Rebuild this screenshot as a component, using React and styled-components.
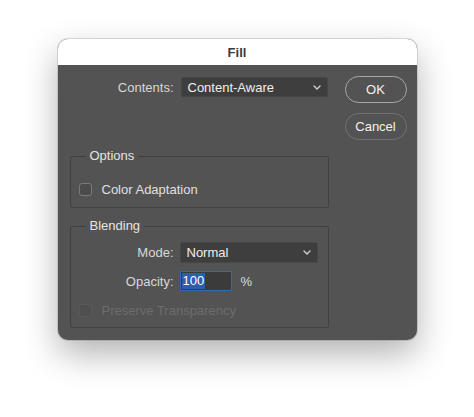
import React from "react";
import styled, { createGlobalStyle } from "styled-components";

const Global = createGlobalStyle`
  html, body {
    margin: 0;
    background: #ffffff;
  }
  body {
    font-family: "Liberation Sans", Arial, sans-serif;
    font-size: 13px;
  }
`;

const Page = styled.div`
  display: flex;
  justify-content: center;
  padding-top: 39px;
  width: 474px;
  height: 417px;
  box-sizing: border-box;
`;

const Dialog = styled.div`
  width: 359px;
  height: 301px;
  border-radius: 10px;
  overflow: hidden;
  background: #535353;
  box-shadow: 0 14px 34px rgba(0, 0, 0, 0.3), 0 0 0 1px rgba(0, 0, 0, 0.12);
  display: flex;
  flex-direction: column;
`;

const TitleBar = styled.div`
  height: 28px;
  background: #ffffff;
  display: flex;
  align-items: center;
  justify-content: center;
  font-weight: bold;
  font-size: 13px;
  color: #3b3b3b;
`;

const Body = styled.div`
  display: flex;
  padding: 12px 10px 12px 12px;
  color: #dedede;
`;

const Main = styled.div`
  width: 259px;
  display: flex;
  flex-direction: column;
`;

const ContentsRow = styled.div`
  display: flex;
  align-items: center;
  justify-content: flex-end;
  gap: 7px;
  padding-right: 1px;
  height: 20px;
`;

const Label = styled.span`
  color: #d8d8d8;
  white-space: nowrap;
`;

const Select = styled.div`
  width: ${(p) => p.width}px;
  height: ${(p) => p.height}px;
  box-sizing: border-box;
  background: #3e3e3e;
  border: 1px solid #474747;
  border-radius: 2px;
  display: flex;
  align-items: center;
  justify-content: space-between;
  padding: 0 6px 0 6px;
  color: #f0f0f0;
`;

const Chevron = () => (
  <svg width="8" height="5" viewBox="0 0 8 5">
    <path d="M1 1 L4 4 L7 1" fill="none" stroke="#d0d0d0" strokeWidth="1.4" strokeLinecap="round" strokeLinejoin="round" />
  </svg>
);

const Group = styled.fieldset`
  margin: ${(p) => p.top}px 0 0 0;
  padding: ${(p) => p.pad};
  border: 1px solid #414141;
  border-radius: 2px;
  min-width: 0;
`;

const Legend = styled.legend`
  margin-left: 15px;
  padding: 0 4px;
  line-height: 16px;
  color: #e4e4e4;
`;

const CheckRow = styled.label`
  display: flex;
  align-items: center;
  gap: 10px;
  height: 16px;
  padding-left: 8px;
  margin-top: ${(p) => p.top || 0}px;
  color: ${(p) => (p.disabled ? "#6c6c6c" : "#e0e0e0")};
`;

const Box = styled.span`
  width: 13px;
  height: 13px;
  box-sizing: border-box;
  border-radius: 3px;
  background: ${(p) => (p.disabled ? "#4f4f4f" : "#4b4b4b")};
  border: 1px solid ${(p) => (p.disabled ? "#595959" : "#7b7b7b")};
`;

const FormGrid = styled.div`
  display: grid;
  grid-template-columns: 103px auto;
  column-gap: 6px;
  row-gap: 8px;
  align-items: center;
`;

const RightLabel = styled(Label)`
  justify-self: end;
`;

const OpacityCell = styled.div`
  display: flex;
  align-items: center;
  gap: 9px;
`;

const NumberField = styled.div`
  width: 52px;
  height: 20px;
  box-sizing: border-box;
  background: #3b3b3b;
  border: 1px solid #3668ad;
  display: flex;
  align-items: center;
  padding-left: 1px;
`;

const Selected = styled.span`
  background: #2f5ea6;
  color: #ffffff;
  line-height: 16px;
  padding: 0 1px;
`;

const Buttons = styled.div`
  margin-left: 16px;
  margin-top: -1px;
  display: flex;
  flex-direction: column;
  gap: 10px;
`;

const Button = styled.button`
  width: 62px;
  height: 27px;
  border-radius: 14px;
  background: transparent;
  border: 1.5px solid ${(p) => (p.primary ? "#a8a8a8" : "#727272")};
  color: #f2f2f2;
  font-family: "Liberation Sans", Arial, sans-serif;
  font-size: 13px;
  padding: 0;
`;

export default function App() {
  return (
    <>
      <Global />
      <Page>
        <Dialog>
          <TitleBar>Fill</TitleBar>
          <Body>
            <Main>
              <ContentsRow>
                <Label>Contents:</Label>
                <Select width={147} height={20}>
                  Content-Aware
                  <Chevron />
                </Select>
              </ContentsRow>

              <Group top={51} pad="17px 0 10px 0">
                <Legend>Options</Legend>
                <CheckRow>
                  <Box />
                  Color Adaptation
                </CheckRow>
              </Group>

              <Group top={10} pad="8px 0 9px 0">
                <Legend>Blending</Legend>
                <FormGrid>
                  <RightLabel>Mode:</RightLabel>
                  <Select width={138} height={21}>
                    Normal
                    <Chevron />
                  </Select>
                  <RightLabel>Opacity:</RightLabel>
                  <OpacityCell>
                    <NumberField>
                      <Selected>100</Selected>
                    </NumberField>
                    %
                  </OpacityCell>
                </FormGrid>
                <CheckRow disabled top={11}>
                  <Box disabled />
                  Preserve Transparency
                </CheckRow>
              </Group>
            </Main>
            <Buttons>
              <Button primary>OK</Button>
              <Button>Cancel</Button>
            </Buttons>
          </Body>
        </Dialog>
      </Page>
    </>
  );
}
